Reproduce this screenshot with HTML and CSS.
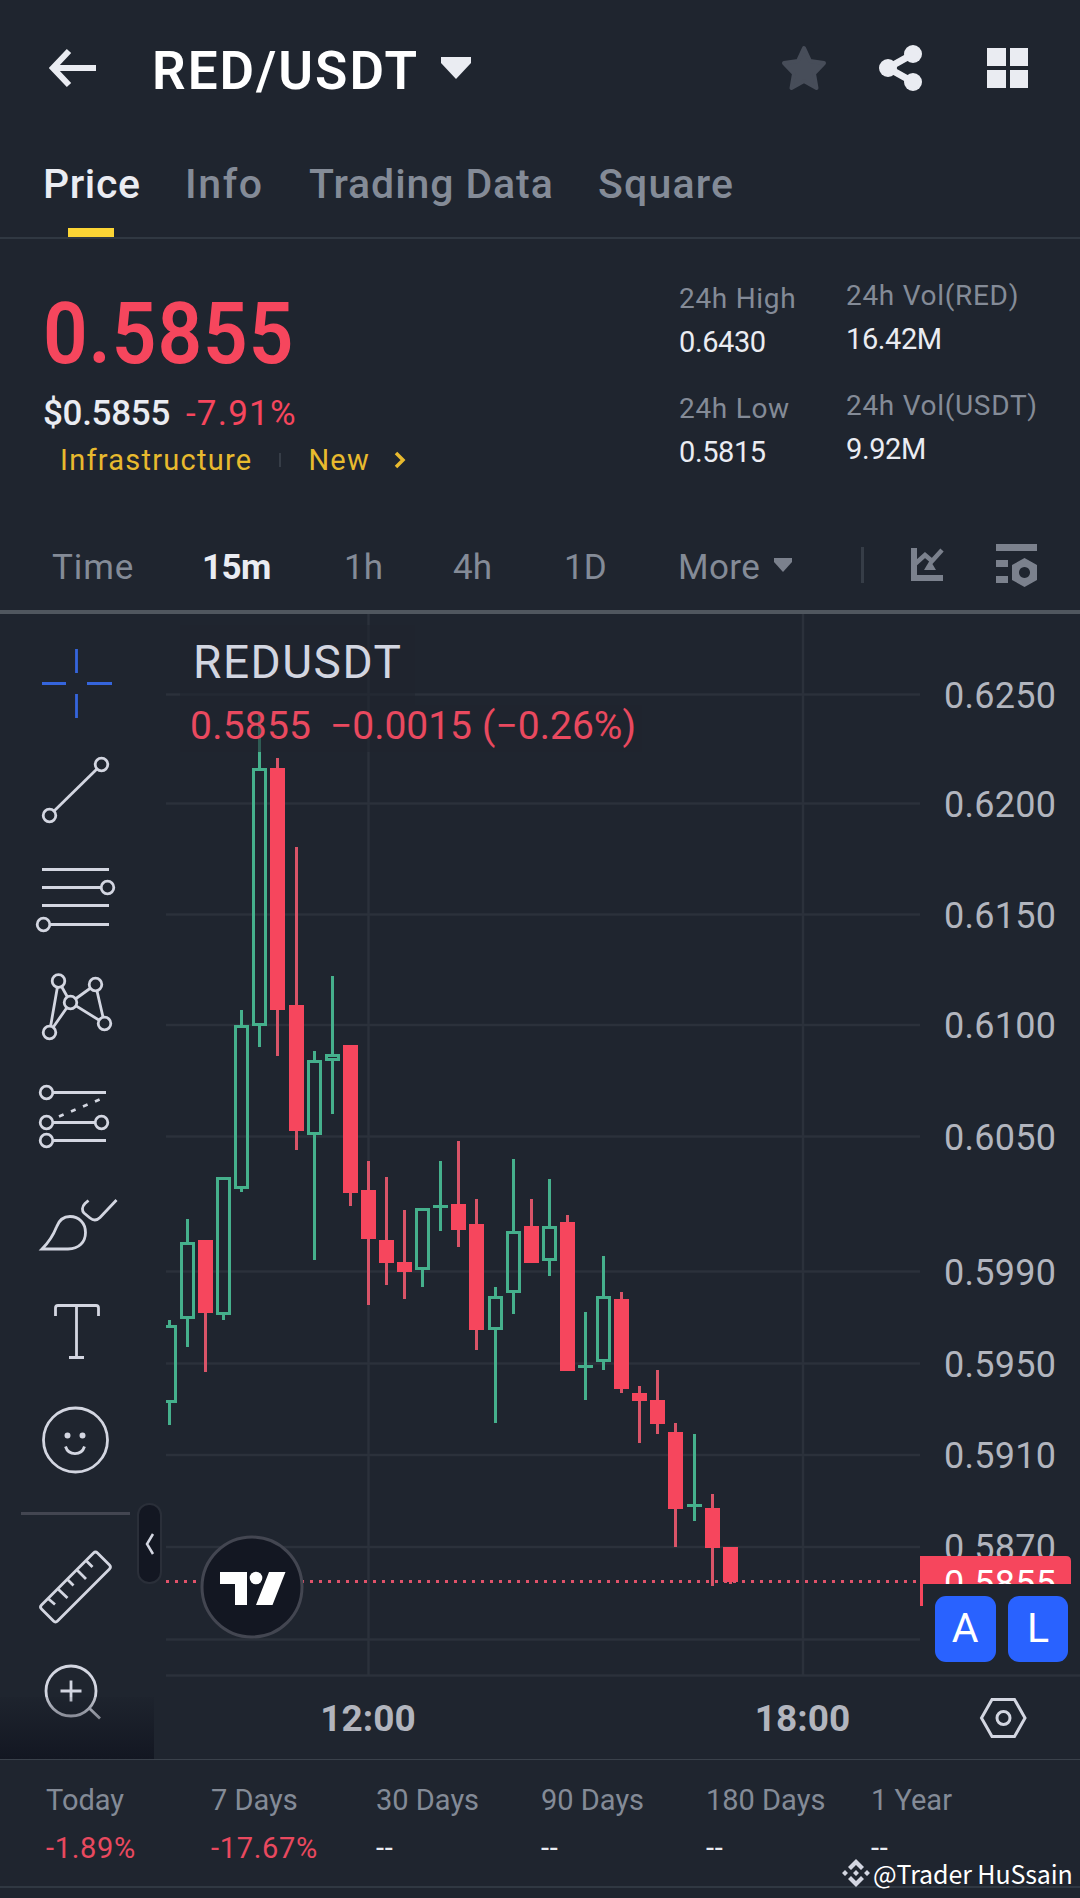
FILE: index.html
```html
<!DOCTYPE html>
<html lang="en">
<head>
  <meta charset="UTF-8" />
  <meta name="viewport" content="width=device-width, initial-scale=1" />
  <title>RED/USDT</title>
  <link rel="stylesheet" href="styles.css">
</head>
<body>

<header class="topbar">
  <svg class="back" width="48" height="40" viewBox="0 0 48 40"><path d="M20 3 4 20l16 17M4 20h43" /></svg>
  <h1>RED/USDT</h1>
  <svg class="caret" width="30" height="22" viewBox="0 0 30 22"><path d="M0 0h30v6L15 22 0 6z" /></svg>
  <svg class="star" width="48" height="48" viewBox="0 0 48 48"><path d="M24 4l6 13 14 2-10 10.500 2.500 14.500L24 37l-12.500 7L14 29.500 4 19l14-2z" /></svg>
  <svg class="share" width="46" height="48" viewBox="0 0 46 48">
    <path d="M35 10 10 24l25 14" />
    <circle cx="35" cy="10" r="9" /><circle cx="10" cy="24" r="9" /><circle cx="35" cy="38" r="9" />
  </svg>
  <svg class="apps" width="41" height="40" viewBox="0 0 41 40"><path d="M0 0h19v18H0zM23 0h18v18H23zM0 22h19v18H0zM23 22h18v18H23z" /></svg>
</header>

<nav class="tabs">
  <a class="tab active" href="#">Price</a>
  <a class="tab info" href="#">Info</a>
  <a class="tab data" href="#">Trading Data</a>
  <a class="tab square" href="#">Square</a>
</nav>

<section class="ticker">
  <div class="last">
    <div class="price">0.5855</div>
    <div class="sub"><span class="usd">$0.5855</span><span class="change">-7.91%</span></div>
    <div class="tags">
      <a href="#">Infrastructure</a>
      <i></i>
      <a class="new" href="#">New</a>
      <svg width="12" height="18" viewBox="0 0 12 18"><path d="M2 2l7 7-7 7" /></svg>
    </div>
  </div>
  <dl class="range">
    <dt>24h High</dt><dd>0.6430</dd>
    <dt>24h Low</dt><dd>0.5815</dd>
  </dl>
  <dl class="volume">
    <dt>24h Vol(RED)</dt><dd>16.42M</dd>
    <dt>24h Vol(USDT)</dt><dd>9.92M</dd>
  </dl>
</section>

<nav class="periods">
  <a class="time" href="#">Time</a>
  <a class="m15" href="#">15m</a>
  <a class="h1" href="#">1h</a>
  <a class="h4" href="#">4h</a>
  <a class="d1" href="#">1D</a>
  <a class="more" href="#">More</a>
  <svg class="more-caret" width="18" height="14" viewBox="0 0 18 14"><path d="M0 0h18v4L9 14 0 4z" /></svg>
  <i class="sep"></i>
  <svg class="ico-chart" width="33" height="33" viewBox="0 0 33 33">
    <path d="M0 0h6v27h26v6H0z" />
    <path class="stroke" d="M4 16 14 7l7 6 10-11" />
    <path d="M19 12l6 10H13z" />
  </svg>
  <svg class="ico-set" width="42" height="44" viewBox="0 0 42 44">
    <path fill-rule="evenodd" d="M0 0h41v7H0zM0 16h12v7H0zM0 32h12v7H0zM28.500 14 41 21v15l-12.500 7L16 36V21zM28.500 23a5.500 5.500 0 1 0 .01 0z" />
  </svg>
</nav>

<main class="chart">
  <div class="tools">
    <svg viewBox="0 0 153 108" class="on"><path d="M76.500 20v24M76.500 65v24M42 54.500h24M87 54.500h25" /></svg>
    <svg viewBox="0 0 153 108"><path d="M49.500 78.500l52-51" /><circle cx="101.500" cy="27.500" r="6.300" /><circle cx="49.500" cy="78.500" r="6.300" /></svg>
    <svg viewBox="0 0 153 108"><path d="M42 24.500h67M42 42.500h60M42 60.500h67M50 79.500h59" /><circle cx="107.500" cy="42.500" r="6.300" /><circle cx="43.500" cy="79.500" r="6.300" /></svg>
    <svg viewBox="0 0 153 108">
      <path d="M49.500 79.500l9-51.500 12 21.500zM95.500 31.500l-25 18 34 21z" />
      <circle cx="58.500" cy="28" r="6.300" /><circle cx="95.500" cy="31.500" r="6.300" /><circle cx="70.500" cy="49.500" r="6.300" />
      <circle cx="104.500" cy="70.500" r="6.300" /><circle cx="49.500" cy="79.500" r="6.300" />
    </svg>
    <svg viewBox="0 0 153 108">
      <path d="M46 31.500h60M46 61.500h55M46 79.500h60" /><path class="dots" d="M59 55.500l43-18" />
      <circle cx="46.500" cy="31.500" r="6.300" /><circle cx="46.500" cy="61.500" r="6.300" /><circle cx="101.500" cy="61.500" r="6.300" /><circle cx="46.500" cy="79.500" r="6.300" />
    </svg>
    <svg viewBox="0 0 153 108"><path d="M42 80h26c11 0 17.500-7 17.500-16.500S79 47.500 70 47.500c-8 0-11.500 5-13.500 10.500C53 67 48 74 42 80zM88.500 31.500 85 34.500c-3.500 3.500-3 7.500-1 9.500l6 5c3.500 3 7 2.500 10-.5l16.500-17.500" /></svg>
    <svg viewBox="0 0 153 108"><path d="M55.500 39v-8q0-2.500 2.500-2.500h38q2.500 0 2.500 2.500v8M76.500 28.500v52M69 80.500h15" /></svg>
    <svg viewBox="0 0 153 108"><circle cx="75.500" cy="55" r="32" /><path d="M65.500 61.500c3 9.500 16 9.500 19 0" /><path class="eyes" d="M67.500 50.500h.01M82.500 50.500h.01" /></svg>
    <hr>
    <svg viewBox="0 0 153 108"><path d="M93.500 20q2-2 4 0l12 12q2 2 0 4l-52 52q-2 2-4 0l-12-12q-2-2 0-4zM48 65.500l7 6M58 56l9.500 9M67.500 46.500l6 6M77 37l9 9M86.500 28l6 6" /></svg>
    <svg viewBox="0 0 153 108"><circle cx="71" cy="50" r="25" /><path d="M60.500 50h21M71 39.500v21M88.500 66.500 100 77.500" /></svg>
    <div class="fade"></div>
  </div>
  <svg class="plot" id="plot" width="927" height="1145" viewBox="153 614 927 1145">
    <g id="grid"></g>
    <g id="candles"></g>
    <path class="last-line" d="M166 1581.500H920" />
    <rect class="veil" x="180" y="625" width="235" height="80" />
    <rect class="veil" x="180" y="705" width="462" height="47" />
    <text class="symbol" x="193" y="678" textLength="208">REDUSDT</text>
    <text class="quote" x="190" y="739" textLength="121">0.5855</text>
    <text class="quote" x="330" y="739" textLength="142">−0.0015</text>
    <text class="quote" x="482" y="739" textLength="154">(−0.26%)</text>
    <g id="axis"></g>
    <path class="tag" d="M920 1556h146q5 0 5 5v23H923v22h-3z" />
    <svg x="920" y="1556" width="151" height="28" viewBox="0 0 151 28"><text class="tag-text" x="24" y="39.500" textLength="112">0.5855</text></svg>
    <text class="hour" x="368" y="1731">12:00</text>
    <text class="hour" x="802.500" y="1731">18:00</text>
    <rect class="btn" x="935" y="1596" width="61" height="66" rx="11" />
    <rect class="btn" x="1008" y="1596" width="60" height="66" rx="11" />
    <text class="btn-text" x="965" y="1642">A</text>
    <text class="btn-text" x="1038" y="1642">L</text>
    <path class="gear" d="M992 1699.500h22.500l10.500 18.500-10.500 18.500H992L981.500 1718z" /><circle class="gear" cx="1003.500" cy="1718" r="6.500" />
    <circle class="tv" cx="252" cy="1587" r="50" />
    <path class="tv-logo" d="M220 1572h27v33h-12v-21h-15zM269 1572h16.500l-13 33H256z" /><circle class="tv-logo" cx="256" cy="1578" r="6.300" />
  </svg>
  <div class="handle"><svg width="10" height="24" viewBox="0 0 10 24"><path d="M8 2 2 12l6 10" /></svg></div>
</main>

<footer class="returns">
  <div>Today<b class="down">-1.89%</b></div>
  <div>7 Days<b class="down">-17.67%</b></div>
  <div>30 Days<b>--</b></div>
  <div>90 Days<b>--</b></div>
  <div>180 Days<b>--</b></div>
  <div>1 Year<b>--</b></div>
</footer>

<div class="watermark">
  <svg width="28" height="28" viewBox="0 0 28 28"><path d="M14 0l8 8-3 3-5-5-5 5-3-3zM14 28l8-8-3-3-5 5-5-5-3 3zM3 11l3 3-3 3-3-3zM25 11l3 3-3 3-3-3zM14 11l3 3-3 3-3-3z" /></svg>
  <span>@Trader HuSsain</span>
</div>

<script src="chart.js"></script>
</body>
</html>
```
FILE: styles.css
```css
* {
  box-sizing: border-box;
}
body {
  margin: 0;
  width: 1080px;
  height: 1898px;
  overflow: hidden;
  position: relative;
  background: #1f252f;
  color: #eaecf2;
  font-family: Roboto, "Liberation Sans", sans-serif;
}
a {
  color: inherit;
  text-decoration: none;
}
svg {
  display: block;
  flex: none;
}

/* Top bar */
.topbar {
  height: 140px;
  padding: 0 52px 4px 48px;
  display: flex;
  align-items: center;
  fill: #eaecf2;
}
.back {
  margin-left: 1px;
  fill: none;
  stroke: #eaecf2;
  stroke-width: 6;
}
h1 {
  margin: 5px 0 0 55px;
  width: 267px;
  font-size: 53px;
  font-weight: 600;
  letter-spacing: 2px;
  color: #fff;
  white-space: nowrap;
}
.caret {
  margin-left: 22px;
}
.star {
  margin-left: auto;
  fill: #474d59;
  stroke: #474d59;
  stroke-width: 4;
  stroke-linejoin: round;
}
.share {
  margin-left: 50px;
}
.share path {
  fill: none;
  stroke: #eaecf2;
  stroke-width: 7;
}
.apps {
  margin-left: 63px;
}

/* Tabs */
.tabs {
  height: 99px;
  padding-left: 43px;
  display: flex;
  border-bottom: 2px solid #303842;
  font-size: 41px;
  font-weight: 500;
  letter-spacing: .9px;
  color: #848b97;
  white-space: nowrap;
}
.tab {
  position: relative;
  padding-top: 20px;
}
.tab.active {
  width: 142px;
  letter-spacing: .6px;
  color: #eaecf2;
}
.tab.active::after {
  content: "";
  position: absolute;
  left: 25px;
  bottom: 0;
  width: 46px;
  height: 9px;
  background: #fcd535;
}
.tab.info {
  width: 124px;
  letter-spacing: 1.6px;
}
.tab.data {
  width: 289px;
}
.tab.square {
  letter-spacing: 1.2px;
}

/* Ticker */
.ticker {
  height: 289px;
  display: flex;
}
.last {
  width: 679px;
  padding: 44px 0 0 43px;
}
.price {
  height: 94px;
  line-height: 102px;
  font-size: 86px;
  font-weight: 600;
  letter-spacing: 1px;
  color: #f6465d;
  transform: scaleX(.91);
  transform-origin: 0 0;
}
.sub {
  display: flex;
  height: 70px;
  line-height: 74px;
  font-size: 35px;
  font-weight: 500;
}
.usd {
  width: 143px;
  letter-spacing: -.3px;
}
.change {
  color: #f6465d;
  font-weight: 400;
  letter-spacing: 1.2px;
}
.tags {
  display: flex;
  align-items: center;
  height: 28px;
  margin-top: -1px;
  padding-left: 17px;
  font-size: 29px;
  letter-spacing: 1.25px;
  color: #e8ba2e;
}
.tags i {
  width: 2px;
  height: 14px;
  margin-left: 27px;
  background: #363d47;
}
.new {
  margin-left: 27px;
}
.tags svg {
  margin-left: 24px;
  fill: none;
  stroke: #e8ba2e;
  stroke-width: 3.500;
}
dl {
  margin: 0;
  width: 167px;
  padding-top: 40px;
  font-size: 29px;
  white-space: nowrap;
}
.volume {
  padding-top: 37px;
}
dt {
  height: 40px;
  line-height: 40px;
  color: #848b97;
  font-size: 28px;
  letter-spacing: .7px;
}
dd {
  margin: 0;
  height: 70px;
  line-height: 46px;
  letter-spacing: -.4px;
}

/* Intervals */
.periods {
  height: 86px;
  position: relative;
  display: flex;
  align-items: center;
  padding: 0 0 3px 52px;
  border-bottom: 4px solid #50575f;
  font-size: 35px;
  color: #848b97;
  fill: #7b818d;
}
.time {
  width: 150px;
  letter-spacing: .9px;
}
.m15 {
  width: 142px;
  font-weight: 700;
  letter-spacing: -.6px;
  color: #eaecf2;
}
.h1 { width: 109px; }
.h4 { width: 111px; }
.d1 { width: 114px; }
.more {
  width: 96px;
  letter-spacing: .4px;
}
.more-caret {
  margin-top: -6px;
}
.sep {
  width: 3px;
  height: 36px;
  margin: -6px 47px 0 69px;
  background: #363d47;
}
.ico-chart {
  margin-top: -6px;
}
.ico-chart .stroke {
  fill: none;
  stroke: #7b818d;
  stroke-width: 4.500;
}
.ico-set {
  margin: -3px 0 0 52px;
}

/* Chart */
.chart {
  position: relative;
  display: flex;
  height: 1146px;
  border-bottom: 1px solid #3a414b;
}
.tools {
  position: relative;
  width: 153px;
  height: 1145px;
  padding-top: 15px;
  fill: #1f252f;
  stroke: #d3d6e1;
  stroke-width: 2.800;
}
.tools svg {
  width: 153px;
  height: 108px;
}
.tools path {
  fill: none;
}
.tools .on {
  stroke: #3565dc;
}
.tools .dots {
  stroke-dasharray: 5 8;
}
.tools .eyes {
  stroke-width: 6;
  stroke-linecap: round;
}
.tools hr {
  width: 109px;
  height: 3px;
  margin: 19px 0 18px 21px;
  border: 0;
  background: #434651;
}
.fade {
  position: absolute;
  left: 0;
  bottom: 0;
  width: 154px;
  height: 62px;
  background: linear-gradient(rgba(19, 23, 34, .1), #131722);
}
.handle {
  position: absolute;
  left: 137px;
  top: 889px;
  width: 25px;
  height: 81px;
  display: flex;
  align-items: center;
  justify-content: center;
  background: #131722;
  border: 2px solid #2a2f39;
  border-radius: 12px;
}
.handle path {
  fill: none;
  stroke: #d3d6e1;
  stroke-width: 2.500;
}
#grid {
  stroke: #2b313b;
  stroke-width: 2.500;
}
.up {
  fill: none;
  stroke: #45b08c;
  stroke-width: 3;
}
.down-body {
  fill: #f6465d;
}
.down-wick {
  stroke: #d95468;
  stroke-width: 3;
}
.last-line {
  stroke: #e0526a;
  stroke-width: 3;
  stroke-dasharray: 3 6;
}
.veil {
  fill: #1f252f;
  opacity: .6;
}
.symbol {
  font-size: 46px;
  fill: #d3d6e1;
}
.quote {
  font-size: 39px;
  fill: #e9495f;
}
#axis {
  font-size: 36px;
  fill: #b2b5be;
}
.tag {
  fill: #f6465d;
}
.tag-text {
  font-size: 36px;
  fill: #fff;
}
.hour {
  font-size: 37px;
  font-weight: 700;
  fill: #b2b5be;
  text-anchor: middle;
}
.btn {
  fill: #2962ff;
}
.btn-text {
  font-size: 41px;
  fill: #fff;
  text-anchor: middle;
}
.gear {
  fill: none;
  stroke: #d3d6e1;
  stroke-width: 3;
}
.tv {
  fill: #131722;
  stroke: #434651;
  stroke-width: 3;
}
.tv-logo {
  fill: #fff;
}

/* Returns */
.returns {
  display: flex;
  height: 128px;
  padding: 21px 0 0 46px;
  border-bottom: 2px solid #303842;
  font-size: 29px;
  line-height: 38px;
  color: #848b97;
}
.returns div {
  width: 165px;
  white-space: nowrap;
}
.returns b {
  display: block;
  margin-top: 10px;
  font-weight: 400;
  letter-spacing: .7px;
  color: #eaecf2;
}
.returns .down {
  color: #e9495f;
}
.watermark {
  position: absolute;
  left: 842px;
  top: 1854px;
  height: 38px;
  display: flex;
  align-items: center;
  gap: 3px;
  font-family: "Noto Sans CJK SC", "Noto Sans", sans-serif;
  font-size: 25px;
  letter-spacing: -.1px;
  color: #fff;
  fill: #d3d6e1;
  white-space: nowrap;
}
```
FILE: chart.js
```js
const plotLeft = 166, plotRight = 920;

// price label -> y
const levels = [
  ['0.6250', 694.5], ['0.6200', 803.5], ['0.6150', 914.5], ['0.6100', 1025], ['0.6050', 1136.5],
  ['0.5990', 1271.5], ['0.5950', 1363.5], ['0.5910', 1455], ['0.5870', 1547], ['', 1639.5]
];

// direction, high, body top, body bottom, low
const candles = [
  ['u', 1320, 1325, 1403, 1425], ['u', 1219, 1242, 1319, 1347], ['d', 1240, 1240, 1313, 1372],
  ['u', 1177, 1177, 1315, 1320], ['u', 1010, 1025, 1189, 1192], ['u', 714, 768, 1026, 1047],
  ['d', 758, 768, 1010, 1056], ['d', 847, 1005, 1131, 1150], ['u', 1051, 1060, 1135, 1260],
  ['u', 976, 1054, 1061, 1114], ['d', 1045, 1045, 1193, 1206], ['d', 1161, 1190, 1239, 1305],
  ['d', 1177, 1240, 1263, 1285], ['d', 1210, 1262, 1272, 1299], ['u', 1208, 1208, 1270, 1287],
  ['u', 1161, 1205, 1208, 1231], ['d', 1141, 1204, 1230, 1247], ['d', 1199, 1224, 1330, 1350],
  ['u', 1287, 1296, 1330, 1423], ['u', 1159, 1231, 1293, 1314], ['d', 1199, 1226, 1263, 1263],
  ['u', 1179, 1226, 1261, 1276], ['d', 1215, 1222, 1371, 1371], ['u', 1312, 1365, 1368, 1400],
  ['u', 1256, 1296, 1362, 1370], ['d', 1292, 1299, 1389, 1393], ['d', 1386, 1393, 1401, 1443],
  ['d', 1370, 1400, 1424, 1434], ['d', 1423, 1432, 1509, 1547], ['u', 1434, 1504, 1507, 1521],
  ['d', 1494, 1508, 1548, 1586], ['d', 1547, 1547, 1582, 1584]
];

let grid = `<path d="M368.500 614V1675M803 614V1675M166 1675.500H1080" />`;
let axis = '';
levels.forEach(([label, y]) => {
  grid += `<path d="M${plotLeft} ${y}H${plotRight}" />`;
  if (label) axis += `<text x="944" y="${y + 13}" textLength="112">${label}</text>`;
});
document.getElementById('grid').innerHTML = grid;
document.getElementById('axis').innerHTML = axis;

let html = '';
candles.forEach(([dir, high, top, bottom, low], i) => {
  const x = Math.round(169.4 + i * 18.09 - 0.5) + 0.5;
  const wicks = `M${x} ${high}V${top}M${x} ${bottom}V${low}`;
  if (dir === 'd') {
    html += `<path class="down-wick" d="${wicks}" /><rect class="down-body" x="${x - 7.5}" y="${top}" width="15" height="${bottom - top}" />`;
  } else if (i === 0) {
    // first candle is cut by the left edge
    html += `<path class="up" d="${wicks}M166 1326.5h9.500V1401.5H166" />`;
  } else if (bottom - top <= 3) {
    html += `<path class="up" d="${wicks}M${x} ${top}v3M${x - 7.5} ${top + 1.5}h15" />`;
  } else {
    html += `<path class="up" d="${wicks}" /><rect class="up" x="${x - 6}" y="${top + 1.5}" width="12" height="${bottom - top - 3}" />`;
  }
});
document.getElementById('candles').innerHTML = html;
```
